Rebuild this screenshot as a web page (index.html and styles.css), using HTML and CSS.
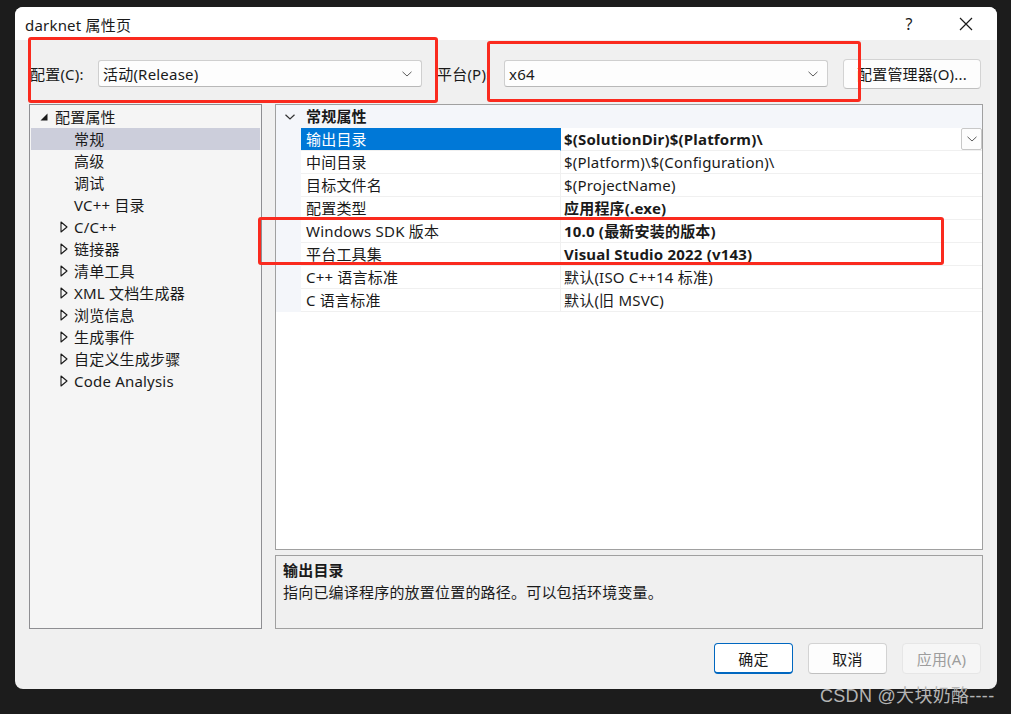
FILE: index.html
```html
<!DOCTYPE html>
<html lang="zh-CN">
<head>
<meta charset="utf-8">
<title>darknet 属性页</title>
<link rel="stylesheet" href="styles.css">
</head>
<body>
<div class="window">
  <div class="titlebar">
    <span class="title">darknet 属性页</span>
    <span class="tb-help">?</span>
    <span class="tb-close"><svg width="14" height="14" viewBox="0 0 14 14"><path d="M1 1L13 13M13 1L1 13" stroke="#1a1a1a" stroke-width="1.2" fill="none"/></svg></span>
  </div>

  <div class="toolbar">
    <span class="lbl">配置(C):</span>
    <div class="combo"><span>活动(Release)</span><svg class="chev" width="10" height="6" viewBox="0 0 10 6"><path d="M0.5 0.8L5 5L9.5 0.8" stroke="#5c5c5c" stroke-width="1" fill="none"/></svg></div>
    <span class="lbl lbl2">平台(P):</span>
    <div class="combo"><span>x64</span><svg class="chev" width="10" height="6" viewBox="0 0 10 6"><path d="M0.5 0.8L5 5L9.5 0.8" stroke="#5c5c5c" stroke-width="1" fill="none"/></svg></div>
    <button class="btn mgr">配置管理器(O)...</button>
  </div>

  <div class="main">
    <div class="tree">
      <div class="node lv0"><svg class="exp" width="8" height="8" viewBox="0 0 8 8"><path d="M7.5 0.5V7.5H0.5Z" fill="#1a1a1a"/></svg><span>配置属性</span></div>
      <div class="node lv1 sel"><span>常规</span></div>
      <div class="node lv1"><span>高级</span></div>
      <div class="node lv1"><span>调试</span></div>
      <div class="node lv1"><span>VC++ 目录</span></div>
      <div class="node lv1 col"><svg class="tri" width="8" height="12" viewBox="0 0 8 12"><path d="M1 1L7 6L1 11Z" stroke="#1a1a1a" stroke-width="1.1" fill="none" stroke-linejoin="round"/></svg><span>C/C++</span></div>
      <div class="node lv1 col"><svg class="tri" width="8" height="12" viewBox="0 0 8 12"><path d="M1 1L7 6L1 11Z" stroke="#1a1a1a" stroke-width="1.1" fill="none" stroke-linejoin="round"/></svg><span>链接器</span></div>
      <div class="node lv1 col"><svg class="tri" width="8" height="12" viewBox="0 0 8 12"><path d="M1 1L7 6L1 11Z" stroke="#1a1a1a" stroke-width="1.1" fill="none" stroke-linejoin="round"/></svg><span>清单工具</span></div>
      <div class="node lv1 col"><svg class="tri" width="8" height="12" viewBox="0 0 8 12"><path d="M1 1L7 6L1 11Z" stroke="#1a1a1a" stroke-width="1.1" fill="none" stroke-linejoin="round"/></svg><span>XML 文档生成器</span></div>
      <div class="node lv1 col"><svg class="tri" width="8" height="12" viewBox="0 0 8 12"><path d="M1 1L7 6L1 11Z" stroke="#1a1a1a" stroke-width="1.1" fill="none" stroke-linejoin="round"/></svg><span>浏览信息</span></div>
      <div class="node lv1 col"><svg class="tri" width="8" height="12" viewBox="0 0 8 12"><path d="M1 1L7 6L1 11Z" stroke="#1a1a1a" stroke-width="1.1" fill="none" stroke-linejoin="round"/></svg><span>生成事件</span></div>
      <div class="node lv1 col"><svg class="tri" width="8" height="12" viewBox="0 0 8 12"><path d="M1 1L7 6L1 11Z" stroke="#1a1a1a" stroke-width="1.1" fill="none" stroke-linejoin="round"/></svg><span>自定义生成步骤</span></div>
      <div class="node lv1 col"><svg class="tri" width="8" height="12" viewBox="0 0 8 12"><path d="M1 1L7 6L1 11Z" stroke="#1a1a1a" stroke-width="1.1" fill="none" stroke-linejoin="round"/></svg><span>Code Analysis</span></div>
    </div>

    <div class="splitter"></div>

    <div class="right">
      <div class="grid">
        <div class="ghead">
          <div class="gstrip"><svg width="10" height="6" viewBox="0 0 10 6"><path d="M0.5 0.8L5 5L9.5 0.8" stroke="#333" stroke-width="1.2" fill="none"/></svg></div>
          <div class="gcat">常规属性</div>
        </div>
        <div class="grow selrow"><div class="gstrip"></div><div class="gname">输出目录</div><div class="gval b">$(SolutionDir)$(Platform)\<span class="ddbtn"><svg width="10" height="6" viewBox="0 0 10 6"><path d="M0.5 0.8L5 5L9.5 0.8" stroke="#5c5c5c" stroke-width="1" fill="none"/></svg></span></div></div>
        <div class="grow"><div class="gstrip"></div><div class="gname">中间目录</div><div class="gval">$(Platform)\$(Configuration)\</div></div>
        <div class="grow"><div class="gstrip"></div><div class="gname">目标文件名</div><div class="gval">$(ProjectName)</div></div>
        <div class="grow"><div class="gstrip"></div><div class="gname">配置类型</div><div class="gval b">应用程序(.exe)</div></div>
        <div class="grow"><div class="gstrip"></div><div class="gname">Windows SDK 版本</div><div class="gval b">10.0 (最新安装的版本)</div></div>
        <div class="grow"><div class="gstrip"></div><div class="gname">平台工具集</div><div class="gval b">Visual Studio 2022 (v143)</div></div>
        <div class="grow"><div class="gstrip"></div><div class="gname">C++ 语言标准</div><div class="gval">默认(ISO C++14 标准)</div></div>
        <div class="grow"><div class="gstrip"></div><div class="gname">C 语言标准</div><div class="gval">默认(旧 MSVC)</div></div>
      </div>
      <div class="desc">
        <div class="dtitle">输出目录</div>
        <div class="dtext">指向已编译程序的放置位置的路径。可以包括环境变量。</div>
      </div>
    </div>
  </div>

  <div class="footer">
    <button class="btn fbtn def">确定</button>
    <button class="btn fbtn">取消</button>
    <button class="btn fbtn dis">应用(A)</button>
  </div>
</div>

<div class="annot a1"></div>
<div class="annot a2"></div>
<div class="annot a3"></div>
<div class="watermark">CSDN @大块奶酪----</div>
</body>
</html>
```

FILE: styles.css
```css
* { box-sizing: border-box; }
html, body {
  margin: 0;
  padding: 0;
}
body {
  width: 1011px;
  height: 714px;
  background: #1c1c1c;
  font-family: "Noto Sans", "Noto Sans CJK SC", sans-serif;
  font-size: 15px;
  letter-spacing: 0.2px;
  color: #1a1a1a;
  position: relative;
  overflow: hidden;
  padding-top: 7px;
  padding-left: 15px;
}
.window {
  width: 982px;
  height: 682px;
  background: #f0f0f0;
  border-radius: 8px;
  overflow: hidden;
  display: flex;
  flex-direction: column;
}
.titlebar {
  height: 33px;
  background: #ffffff;
  display: flex;
  align-items: center;
  padding-left: 10px;
  flex: none;
}
.title {
  flex: 1;
  font-size: 15px;
  padding-top: 2px;
}
.tb-help {
  width: 14px;
  text-align: center;
  font-size: 16px;
  margin-right: 43px;
  padding-top: 1px;
}
.tb-close {
  width: 14px;
  height: 14px;
  margin-right: 24px;
  display: flex;
}

.toolbar {
  height: 64px;
  flex: none;
  display: flex;
  align-items: center;
  padding: 3px 0 0 15px;
}
.lbl { width: 68px; white-space: nowrap; }
.lbl2 { margin-left: 15px; width: 67px; }
.combo {
  width: 324px;
  height: 27px;
  background: #fdfdfd;
  border: 1px solid #cfcfcf;
  border-bottom-color: #b8b8b8;
  border-radius: 3px;
  display: flex;
  align-items: center;
  padding: 0 9px 0 4px;
}
.combo span { flex: 1; }
.chev { flex: none; }
.btn {
  font-family: inherit;
  font-size: 15px;
  letter-spacing: 0.2px;
  color: #1a1a1a;
  background: #fdfdfd;
  border: 1px solid #d3d3d3;
  border-bottom-color: #c0c0c0;
  border-radius: 4px;
  padding: 0;
}
.mgr {
  margin-left: 15px;
  width: 138px;
  height: 30px;
}

.main {
  height: 525px;
  flex: none;
  display: flex;
  padding-left: 14px;
}
.tree {
  width: 233px;
  height: 525px;
  background: #f5f5f5;
  border: 1px solid #8e8e92;
  padding: 1px 1px 0 1px;
}
.node {
  height: 22px;
  display: flex;
  align-items: center;
  white-space: nowrap;
}
.node span { line-height: 22px; }
.lv0 { padding-left: 9px; }
.lv0 .exp { margin-right: 7px; margin-top: -1px; }
.lv1 { padding-left: 43px; }
.lv1.col { padding-left: 29px; }
.lv1.col .tri { margin-right: 6px; }
.sel { background: #cccedb; }

.splitter { width: 13px; }

.right {
  width: 708px;
  display: flex;
  flex-direction: column;
}
.grid {
  height: 446px;
  background: #ffffff;
  border: 1px solid #a0a0a0;
}
.ghead {
  height: 23px;
  display: flex;
  background: #f4f6fa;
}
.gstrip {
  width: 25px;
  flex: none;
  background: #f4f6fa;
  display: flex;
  align-items: center;
  justify-content: center;
}
.ghead .gstrip { padding-left: 3px; }
.gcat {
  font-weight: bold;
  padding-left: 5px;
  line-height: 23px;
}
.grow {
  height: 23px;
  display: flex;
}
.gname {
  width: 260px;
  flex: none;
  padding-left: 5px;
  line-height: 22px;
  border-bottom: 1px solid #f0f0f0;
  border-right: 1px solid #f0f0f0;
  white-space: nowrap;
}
.gval {
  flex: 1;
  padding-left: 3px;
  line-height: 22px;
  border-bottom: 1px solid #f0f0f0;
  white-space: nowrap;
  display: flex;
}
.gval.b { font-weight: bold; }
.selrow .gname {
  background: #0078d7;
  color: #ffffff;
  border-right-color: #0078d7;
}
.ddbtn {
  margin-left: auto;
  width: 21px;
  height: 22px;
  border: 1px solid #c8c8c8;
  border-radius: 2px;
  background: #fdfdfd;
  display: flex;
  align-items: center;
  justify-content: center;
}
.desc {
  margin-top: 5px;
  height: 74px;
  border: 1px solid #a0a0a0;
  background: #f0f0f0;
  padding: 3px 7px;
}
.dtitle { font-weight: bold; line-height: 22px; }
.dtext { line-height: 23px; }

.footer {
  flex: 1;
  display: flex;
  justify-content: flex-end;
  padding: 14px 16px 0 0;
  gap: 15px;
}
.fbtn {
  width: 79px;
  height: 31px;
}
.fbtn.def {
  background: #ffffff;
  border: 1px solid #0067c0;
  border-bottom-width: 2px;
}
.fbtn.dis {
  color: #9d9d9d;
  background: #f6f6f6;
  border: 1px solid #e6e6e6;
}

.annot {
  position: absolute;
  border: 3px solid #fa2a1e;
  border-radius: 3px;
  pointer-events: none;
}
.a1 { left: 28px; top: 37px; width: 410px; height: 66px; }
.a2 { left: 487px; top: 41px; width: 374px; height: 61px; }
.a3 { left: 258px; top: 217px; width: 686px; height: 48px; }

.watermark {
  position: absolute;
  left: 820px;
  top: 681px;
  font-family: "Liberation Sans", "Noto Sans CJK SC", sans-serif;
  font-size: 18px;
  letter-spacing: 0.3px;
  color: #b4b4b4;
  white-space: nowrap;
}
```
